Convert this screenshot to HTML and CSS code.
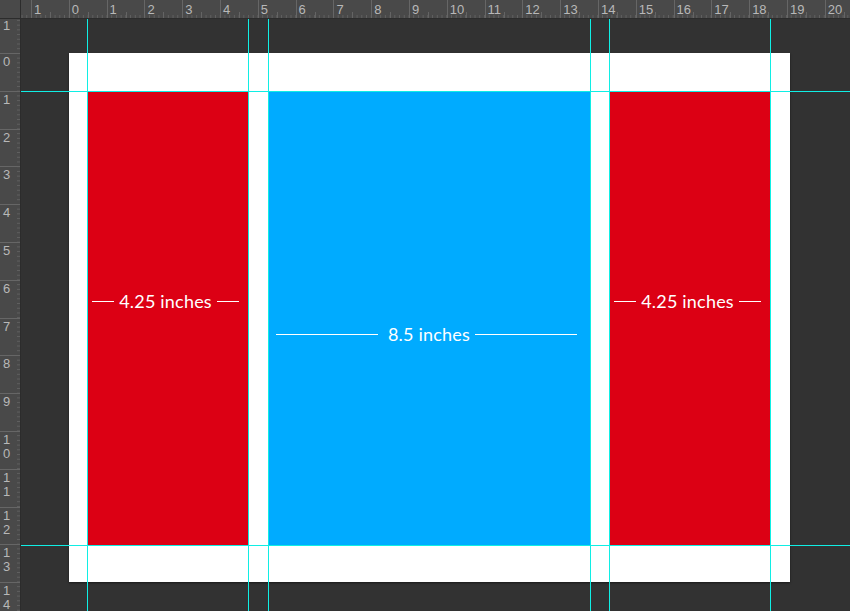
FILE: index.html
```html
<!DOCTYPE html>
<html lang="en">
<head>
    <meta charset="UTF-8">
    <meta name="viewport" content="width=device-width, initial-scale=1.0">
    <title>Tri-fold Layout</title>
    <link rel="stylesheet" href="styles.css">
</head>
<body>
    <div class="workspace">
        <!-- ruler corner -->
        <div class="corner"></div>

        <!-- horizontal ruler, one cell per inch -->
        <div class="ruler ruler-top">
            <span class="mark"><i>1</i></span>
            <span class="mark"><i>0</i></span>
            <span class="mark"><i>1</i></span>
            <span class="mark"><i>2</i></span>
            <span class="mark"><i>3</i></span>
            <span class="mark"><i>4</i></span>
            <span class="mark"><i>5</i></span>
            <span class="mark"><i>6</i></span>
            <span class="mark"><i>7</i></span>
            <span class="mark"><i>8</i></span>
            <span class="mark"><i>9</i></span>
            <span class="mark"><i>10</i></span>
            <span class="mark"><i>11</i></span>
            <span class="mark"><i>12</i></span>
            <span class="mark"><i>13</i></span>
            <span class="mark"><i>14</i></span>
            <span class="mark"><i>15</i></span>
            <span class="mark"><i>16</i></span>
            <span class="mark"><i>17</i></span>
            <span class="mark"><i>18</i></span>
            <span class="mark"><i>19</i></span>
            <span class="mark"><i>20</i></span>
        </div>

        <!-- vertical ruler, digits stacked -->
        <div class="ruler ruler-left">
            <span class="mark"><i>1</i></span>
            <span class="mark"><i>0</i></span>
            <span class="mark"><i>1</i></span>
            <span class="mark"><i>2</i></span>
            <span class="mark"><i>3</i></span>
            <span class="mark"><i>4</i></span>
            <span class="mark"><i>5</i></span>
            <span class="mark"><i>6</i></span>
            <span class="mark"><i>7</i></span>
            <span class="mark"><i>8</i></span>
            <span class="mark"><i>9</i></span>
            <span class="mark"><i>1<br>0</i></span>
            <span class="mark"><i>1<br>1</i></span>
            <span class="mark"><i>1<br>2</i></span>
            <span class="mark"><i>1<br>3</i></span>
            <span class="mark"><i>1<br>4</i></span>
        </div>

        <!-- the document area -->
        <div class="canvas">
            <div class="page">
                <div class="panel panel-red">
                    <div class="dim dim-side">
                        <span class="line"></span>
                        <span class="label">4.25 inches</span>
                        <span class="line"></span>
                    </div>
                </div>
                <div class="panel panel-blue">
                    <div class="dim dim-center">
                        <span class="line"></span>
                        <span class="label">8.5 inches</span>
                        <span class="line"></span>
                    </div>
                </div>
                <div class="panel panel-red">
                    <div class="dim dim-side">
                        <span class="line"></span>
                        <span class="label">4.25 inches</span>
                        <span class="line"></span>
                    </div>
                </div>
            </div>

            <!-- guides -->
            <div class="guide guide-v" style="left: 66px"></div>
            <div class="guide guide-v" style="left: 227px"></div>
            <div class="guide guide-v" style="left: 247px"></div>
            <div class="guide guide-v" style="left: 569px"></div>
            <div class="guide guide-v" style="left: 588px"></div>
            <div class="guide guide-v" style="left: 749px"></div>
            <div class="guide guide-h" style="top: 72px"></div>
            <div class="guide guide-h" style="top: 526px"></div>
        </div>
    </div>
</body>
</html>
```

FILE: styles.css
```css
body {
    margin: 0;
    background-color: #323232;
    font-family: "Liberation Sans", Arial, sans-serif;
}

.workspace {
    display: grid;
    grid-template-columns: 21px 1fr;
    grid-template-rows: 19px 1fr;
    width: 850px;
    height: 611px;
    overflow: hidden;
}

.corner {
    background-color: #494949;
    border-bottom: 1px solid #2c2c2c;
    border-right: 1px solid #2c2c2c;
    box-sizing: border-box;
}

.ruler {
    background-color: #494949;
    overflow: hidden;
    display: flex;
    box-sizing: border-box;
}

/* horizontal ruler */
.ruler-top {
    border-bottom: 1px solid #2c2c2c;
    padding-left: 10px;
    /* eighth-inch ticks */
    background-image: linear-gradient(to right, #606060 1px, transparent 1px);
    background-size: 4.725px 3px;
    background-repeat: repeat-x;
    background-position: 10px 100%;
}

.ruler-top .mark {
    flex: 0 0 37.8px;
    height: 100%;
    border-left: 1px solid #666;
    box-sizing: border-box;
    position: relative;
    background-image: linear-gradient(to right, transparent 18.4px, #646464 18.4px, #646464 19.4px, transparent 19.4px);
    background-size: 100% 6px;
    background-repeat: no-repeat;
    background-position: 0 100%;
}

.ruler-top .mark i {
    font-style: normal;
    font-size: 13px;
    color: #b8b8b8;
    position: absolute;
    left: 2px;
    top: 2px;
}

/* vertical ruler */
.ruler-left {
    flex-direction: column;
    border-right: 1px solid #2c2c2c;
    background-image: linear-gradient(to bottom, #606060 1px, transparent 1px);
    background-size: 3px 4.725px;
    background-repeat: repeat-y;
    background-position: 100% -3.8px;
}

.ruler-left .mark {
    flex: 0 0 37.8px;
    border-top: 1px solid #666;
    box-sizing: border-box;
    position: relative;
}

/* the -1 mark sits under the top ruler */
.ruler-left .mark:first-child {
    flex-basis: 34px;
    border-top: 0;
}

.ruler-left .mark i {
    font-style: normal;
    font-size: 13px;
    line-height: 14px;
    color: #b8b8b8;
    position: absolute;
    left: 3px;
    top: 1px;
}

.ruler-left .mark:first-child i {
    top: 0;
}

/* document */
.canvas {
    position: relative;
    padding: 34px 0 0 48px;
}

.page {
    width: 721px;
    height: 529px;
    background-color: #fff;
    box-sizing: border-box;
    padding: 38px 20px 37px 18px;
    display: flex;
    box-shadow: 0 1px 2px rgba(0, 0, 0, 0.5);
}

.panel {
    display: flex;
    flex-direction: column;
    justify-content: center;
}

.panel-red {
    flex: 0 0 161px;
    background-color: #dc0014;
}

.panel-red + .panel-blue {
    margin-left: 20px;
}

.panel-blue {
    flex: 0 0 322px;
    background-color: #00abff;
    margin-right: 19px;
}

.dim {
    display: flex;
    align-items: center;
    color: #fff;
    font-family: Lato, "Noto Sans", sans-serif;
    font-size: 18px;
    letter-spacing: 0.2px;
}

.dim .line {
    height: 1px;
    background-color: #fff;
}

.dim-side {
    justify-content: center;
    gap: 5px;
    margin-top: -34px;
    padding-right: 4px;
}

.dim-side .line {
    flex: 0 0 22px;
}

.dim-center {
    gap: 10px;
    margin-top: 32px;
    padding: 0 13px 0 8px;
}

.dim-center .line {
    flex: 1;
}

.dim-center .line:last-child {
    margin-left: -5px;
}

/* guides */
.guide {
    position: absolute;
    background-color: #10eee4;
}

.guide-v {
    top: 0;
    bottom: 0;
    width: 1px;
}

.guide-h {
    left: 0;
    right: 0;
    height: 1px;
}
```
